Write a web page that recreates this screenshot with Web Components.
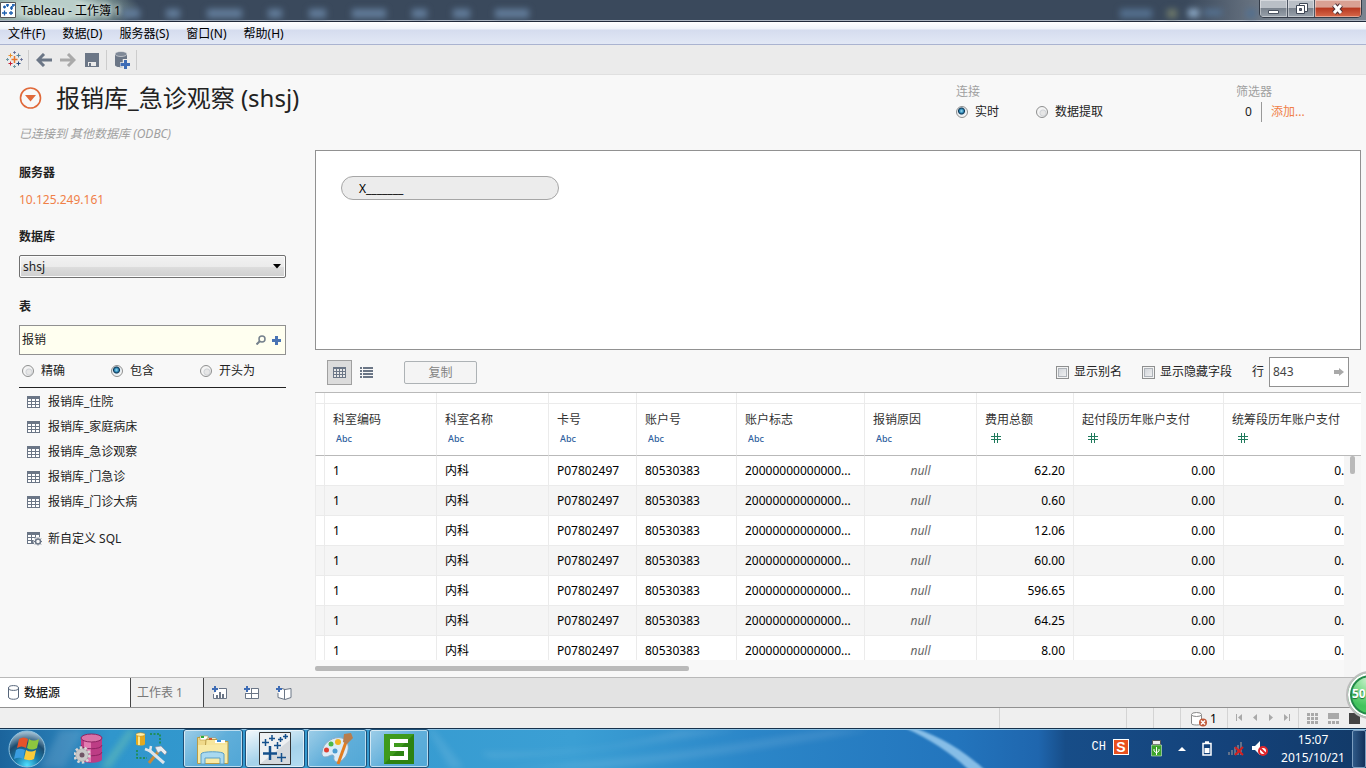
<!DOCTYPE html>
<html lang="zh-CN">
<head>
<meta charset="utf-8">
<title>Tableau - 工作簿 1</title>
<style>
html, body { margin: 0; height: 100%; }
body { font: 12px/16px "Noto Sans", "Noto Sans CJK SC", sans-serif; color: #222; background: #f8f8f8; }
</style>
</head>
<body>
<tb-app></tb-app>
<script>
const BASE = `
*, *::before, *::after { box-sizing: border-box; }
button, input, select { font: inherit; color: inherit; margin: 0; }
button { padding: 0; border: 0; background: none; }
a { text-decoration: none; color: #f08048; }
svg { display: block; flex: none; }
input[type=radio], input[type=checkbox] { appearance: none; flex: none; border: 1px solid #8e8f8f; }
input[type=radio] { width: 12px; height: 12px; border-radius: 50%;
  background: radial-gradient(circle at 60% 60%, #e6e6e6 0 2px, #cfd2d6 3px, #f4f4f4 4px); }
input[type=radio]:checked { background: radial-gradient(circle at 45% 40%, #9fe0f5 0, #2b86b5 2px, #0d3350 3px, #dfe9f0 4px, #f4f4f4 5px); }
input[type=checkbox] { width: 13px; height: 13px; border: 1px solid #8e8f8f; box-shadow: inset 0 0 0 1px #f4f4f4, inset 0 0 0 2px #aeb3b9;
  background: linear-gradient(135deg, #cbcfd5, #f6f6f6); }
label { display: flex; align-items: center; gap: 6px; }
`;
function define(name, css, html) {
  const t = document.createElement('template');
  t.innerHTML = `<style>${BASE}${css}</style>${html}`;
  customElements.define(name, class extends HTMLElement {
    constructor() {
      super();
      this.attachShadow({ mode: 'open' }).append(t.content.cloneNode(true));
    }
  });
}
const TABLE_ICON = `<svg width="13" height="12" viewBox="0 0 13 12"><path fill="#6b7686" d="M0 0h13v12H0z"/><path fill="#fff" d="M1 3h3v2H1zM5 3h3v2H5zM9 3h3v2H9zM1 6h3v2H1zM5 6h3v2H5zM9 6h3v2H9zM1 9h3v2H1zM5 9h3v2H5zM9 9h3v2H9z"/></svg>`;

define('title-bar', `
:host { display: flex; position: relative; height: 22px; overflow: hidden; align-items: center;
  border-bottom: 1px solid #20293a; box-shadow: inset 0 -1px #aab3bf; color: #000;
  background: radial-gradient(ellipse 90px 26px at 50px 8px, #b9cec9 0 40%, #8fa9a4aa 70%, #3a495c00 100%), linear-gradient(90deg, #7f9a90, #3a495c 130px calc(100% - 180px), #76808c calc(100% - 90px), #7a8490); }
.title { flex: 1; padding-left: 5px; text-shadow: 0 0 5px #dfe8e6, 0 0 5px #dfe8e6; position: relative; }
.ghost { position: absolute; top: 0; left: 0; filter: blur(3px); }
.ghost.r { left: auto; right: 100px; }
.win { display: flex; align-self: flex-start; height: 18px; margin-right: 4px; border: 1px solid #333b47; border-top: 0; border-radius: 0 0 5px 5px; overflow: hidden; position: relative; }
.win button { width: 28px; display: grid; place-items: center; background: linear-gradient(#b9bfc6 45%, #7a838e 50%, #98a1ab); border-right: 1px solid #4c5562; box-shadow: inset 0 0 0 1px #ffffff66; }
.win button + button { width: 27px; }
.win button.x { width: 46px; border: 0; background: linear-gradient(#d9a093 40%, #b83a22 50%, #d8694a); }
`, `
<svg class="ghost" width="540" height="21"><g fill="#627c9a"><path d="M122 9h18v9h-18zM166 9h14v9h-14zM207 9h35v9h-35zM268 9h14v9h-14zM309 9h17v9h-17zM352 9h34v9h-34zM412 9h15v9h-15zM453 9h17v9h-17zM495 9h34v9h-34z"/></g></svg>
<svg class="ghost r" width="150" height="21"><path fill="#54708f" d="M4 9h32v9H4zM88 9h18v7H88zM130 9h10v9h-10z"/><path fill="#6d786a" d="M51 9h10v9H51z"/><path fill="#8eabc8" d="M72 9h11v8H72z"/></svg>
<svg width="16" height="17" viewBox="0 0 16 17"><path fill="#fff" stroke="#555" d="M.5.5h15v15H.5z"/><path stroke="#1c5fae" stroke-width="1.300" d="M2 11h5M4.500 8.500v5M3 5h3M4.500 3.500v3M6 3h3M7.500 2v3M10 6h3M11.500 4v4M12 3h3M13 2v3M9 11h4M11 9v4"/></svg>
<span class="title">Tableau - 工作簿 1</span>
<div class="win">
<button aria-label="最小化"><svg width="13" height="14"><path fill="#fff" stroke="#4a5360" d="M1.500 8.500h10v3h-10z"/></svg></button>
<button aria-label="还原"><svg width="13" height="13"><path fill="#fff" stroke="#3f4856" d="M4.500 1.500h8v8h-8z"/><path fill="#fff" stroke="#3f4856" d="M1.500 3.500h8v8h-8z"/><path fill="#667" stroke="#3f4856" d="M4.500 6.500h2v2h-2z"/></svg></button>
<button class="x" aria-label="关闭"><svg width="14" height="12"><path stroke="#4d2f35" stroke-width="5" d="M3 2l7 8M10 2l-7 8"/><path stroke="#fff" stroke-width="3" d="M3 2l7 8M10 2l-7 8"/></svg></button>
</div>`);

define('menu-bar', `
:host { display: flex; height: 23px; padding: 2px 8px 0; gap: 17px; align-items: center; color: #000; border-bottom: 1px solid #aab3d0;
  background: linear-gradient(#fff 0, #eff3fa 7px, #d5dcee 8px, #e2e8f5 100%); }
`, `<button>文件(F)</button><button>数据(D)</button><button>服务器(S)</button><button>窗口(N)</button><button>帮助(H)</button>`);

define('tool-bar', `
:host { display: flex; height: 30px; padding: 0 6px; align-items: center; background: #ebebeb; border-bottom: 1px solid #e0e0e0; }
button { width: 24px; height: 24px; display: grid; place-items: center; }
button.first { width: 17px; }
i { width: 1px; height: 20px; background: #ccc; margin: 0 3px 0 2px; }
.first + i { margin-left: 5px; }
`, `
<button class="first" aria-label="开始"><svg width="17" height="17" viewBox="0 0 17 17" fill="none"><path stroke="#e8762c" stroke-width="1.500" d="M5.500 8.500h6M8.500 5v7"/><path stroke="#eb9129" d="M2.500 4.500h4M4.500 2.500v4"/><path stroke="#59879b" d="M10.500 4.500h4M12.500 2.500v4"/><path stroke="#c72035" d="M2.500 12.500h4M4.500 10.500v4"/><path stroke="#1f457e" d="M10.500 12.500h4M12.500 10.500v4"/><path stroke="#5b6591" stroke-opacity=".8" d="M7 1.500h3M8.500 0v3M14 8.500h3M15.500 7v3"/><path stroke="#7099a5" d="M0 8.500h3M1.500 7v3M7 15.500h3M8.500 14v3"/></svg></button>
<i></i>
<button aria-label="后退"><svg width="16" height="14" fill="none" stroke="#6b7686" stroke-width="3"><path d="M2 7h14M8 1L2 7l6 6"/></svg></button>
<button aria-label="前进"><svg width="16" height="14" fill="none" stroke="#a9a9a9" stroke-width="3"><path d="M0 7h14M8 1l6 6-6 6"/></svg></button>
<button aria-label="保存"><svg width="14" height="14"><path fill="#6b7686" d="M0 0h14v14H0z"/><path fill="#ebebeb" d="M3 9h8v4H3z"/><path fill="#6b7686" d="M4 10h2v3H4z"/></svg></button>
<i></i>
<button aria-label="新建数据源"><svg width="16" height="18"><path fill="#6b7686" d="M1 3v11c0 3 12 3 12 0V3z"/><ellipse cx="7" cy="3" rx="6" ry="2.500" fill="#7f8997" stroke="#ebebeb" stroke-width=".6"/><path stroke="#ebebeb" stroke-width="4.500" d="M6 13.500h10M11 8v10"/><path stroke="#3e6cb5" stroke-width="3" d="M6.500 13.500H16M11.500 9v9"/></svg></button>
<i></i>`);

define('source-header', `
:host { display: flex; height: 75px; padding-left: 19px; }
.name { flex: 1; }
h1 { display: flex; align-items: center; gap: 14px; margin: 0; padding-top: 5px; font: 24px/36px "Noto Sans", "Noto Sans CJK SC", sans-serif; color: #222; }
p { margin: 0; padding-top: 10px; font-style: italic; color: #a0a0a0; }
.grp { padding-top: 9px; }
.grp > span { color: #a0a0a0; display: block; margin-bottom: 2px; }
.live { width: 280px; } .filter { width: 130px; }
.row { display: flex; align-items: center; height: 20px; }
label { width: 80px; gap: 7px; }
label + label { width: 120px; }
b { font-weight: 400; width: 26px; padding-left: 9px; border-right: 1px solid #999; line-height: 20px; margin-right: 9px; }
`, `
<div class="name"><h1><svg width="23" height="23" viewBox="0 0 23 23"><circle cx="11.500" cy="11" r="10" fill="none" stroke="#e0693a" stroke-width="1.600"/><path fill="#e0693a" d="M6 8h11l-5.500 6.500z"/></svg><span>报销库_急诊观察 (shsj)</span></h1>
<p>已连接到 其他数据库 (ODBC)</p></div>
<div class="grp live"><span>连接</span><div class="row"><label><input type="radio" name="mode" checked>实时</label><label><input type="radio" name="mode">数据提取</label></div></div>
<div class="grp filter"><span>筛选器</span><div class="row"><b>0</b><a href="#add">添加...</a></div></div>`);

define('side-panel', `
:host { display: block; padding: 15px 29px 0 19px; width: 315px; flex: none; }
h2 { margin: 0; font: bold 12px/16px "Noto Sans", "Noto Sans CJK SC", sans-serif; }
.ip { display: block; margin: 11px 0 21px; }
.sel { position: relative; display: block; margin: 10px 0 21px; }
select { appearance: none; width: 100%; height: 23px; padding: 0 3px; border: 1px solid #707070; border-radius: 2px; display: block;
  box-shadow: inset 0 0 0 1px #fcfcfc; background: linear-gradient(#f2f2f2, #ebebeb 50%, #dddddd 51%, #cfcfcf); color: #222; }
.sel svg { position: absolute; right: 5px; top: 9px; }
.find { display: flex; align-items: center; gap: 6px; height: 30px; margin: 10px 0 8px; border: 1px solid #919191; background: #fffff0; padding: 0 4px 0 2px; }
.find input { flex: 1; min-width: 0; border: 0; padding: 0; background: none; outline: 0; }
.how { display: grid; grid-template-columns: repeat(3, 1fr); padding: 0 0 8px 3px; margin-right: -3px; }
.how label { gap: 7px; }
hr { margin: 0 0 1px; border: 0; height: 1px; background: #222; }
ul { margin: 0; padding: 0; list-style: none; }
li { display: flex; align-items: center; gap: 8px; height: 25px; padding-left: 8px; }
.sql { margin-top: 12px; gap: 6px; }
`, `
<h2>服务器</h2><a class="ip" href="#server">10.125.249.161</a>
<h2 id="db">数据库</h2><div class="sel"><select aria-labelledby="db"><option>shsj</option></select><svg width="8" height="5"><path d="M0 0h8L4 4.500z"/></svg></div>
<h2 id="tb">表</h2>
<div class="find"><input type="text" aria-labelledby="tb" value="报销"><svg width="10" height="10" fill="none" stroke="#75808c" stroke-width="1.500"><circle cx="6" cy="4" r="3"/><path stroke-width="2" d="M4 6L.5 9.500"/></svg><svg width="9" height="9" stroke="#4a74b4" stroke-width="3"><path d="M0 4.500h9M4.500 0v9"/></svg></div>
<div class="how"><label><input type="radio" name="how">精确</label><label><input type="radio" name="how" checked>包含</label><label><input type="radio" name="how">开头为</label></div>
<hr>
<ul>
${['住院','家庭病床','急诊观察','门急诊','门诊大病'].map(n => `<li>${TABLE_ICON}报销库_${n}</li>`).join('')}
<li class="sql"><svg width="15" height="14"><path fill="#6b7686" d="M0 0h13v12H0z"/><path fill="#fff" d="M1 3h3v2H1zM5 3h3v2H5zM9 3h3v2H9zM1 6h3v2H1zM5 6h3v2H5zM1 9h3v2H1z"/><circle cx="11" cy="9.500" r="4.500" fill="#f8f8f8"/><circle cx="11" cy="9.500" r="2.500" fill="none" stroke="#6b7686" stroke-width="1.500"/><path stroke="#6b7686" d="M11 5.500v1M11 12.500v1M7 9.500h1M14 9.500h1M8 6.500l1 1M13 11.500l1 1M14 6.500l-1 1M9 11.500l-1 1"/></svg>新自定义 SQL</li>
</ul>`);

define('join-canvas', `
:host { display: block; height: 200px; padding: 25px; background: #fff; border: 1px solid #919191; }
div { width: 218px; height: 24px; padding: 0 17px; line-height: 24px; border: 1px solid #a6a6a6; border-radius: 12px; background: #ececec; color: #000; }
`, `<div>X_______</div>`);

define('grid-tools', `
:host { display: flex; align-items: center; height: 42px; padding: 2px 12px 0; }
.on { width: 25px; height: 25px; display: grid; place-items: center; background: #dcdcdc; border: 1px solid #a0a0a0; }
.list { margin: 0 31px 0 8px; }
.copy { width: 73px; height: 23px; padding-top: 1px; border: 1px solid #adb2b5; border-radius: 2px; background: #f4f4f4; color: #838383; }
.sp { flex: 1; }
label { gap: 5px; margin-right: 20px; }
.rows { margin: 0; }
.num { display: flex; align-items: center; width: 80px; height: 30px; border: 1px solid #919191; background: #fff; padding: 0 4px 0 3px; }
.num input { width: 60px; flex: 1; min-width: 0; border: 0; padding: 0; background: none; outline: 0; color: #444; }
`, `
<button class="on" aria-label="网格"><svg width="13" height="11" viewBox="0 0 13 11"><path fill="#6b7686" d="M0 0h13v11H0z"/><path fill="#e8e8e8" d="M1 2h2v2H1zM4 2h2v2H4zM7 2h2v2H7zM10 2h2v2h-2zM1 5h2v2H1zM4 5h2v2H4zM7 5h2v2H7zM10 5h2v2h-2zM1 8h2v2H1zM4 8h2v2H4zM7 8h2v2H7zM10 8h2v2h-2z"/></svg></button>
<button class="list" aria-label="列表"><svg width="13" height="11"><path fill="#6b7686" d="M0 0h2v2H0zM3 0h10v2H3zM0 3h2v2H0zM3 3h10v2H3zM0 6h2v2H0zM3 6h10v2H3zM0 9h2v2H0zM3 9h10v2H3z"/></svg></button>
<button class="copy">复制</button>
<span class="sp"></span>
<label><input type="checkbox">显示别名</label><label><input type="checkbox">显示隐藏字段</label>
<label class="rows">行<span class="num"><input type="text" value="843"><svg width="10" height="8"><path fill="#a9a9a9" d="M0 2h5V0l5 4-5 4V6H0z"/></svg></span></label>`);

const COLS = [['科室编码','a',112],['科室名称','a',112],['卡号','a',88],['账户号','a',100],['账户标志','a',128],['报销原因','a',112],['费用总额','n',97],['起付段历年账户支付','n',150],['统筹段历年账户支付','n',143]];
const AMOUNTS = ['62.20','0.60','12.06','60.00','596.65','64.25','8.00'];
define('data-grid', `
:host { display: flex; flex-direction: column; flex: 1; min-height: 0; position: relative; border-top: 1px solid #b9b9b9; }
.view { flex: 1; min-height: 0; overflow: hidden; background: #fff; }
table { border-collapse: separate; border-spacing: 0; table-layout: fixed; width: 1051px; min-width: 100%; }
th, td { border-left: 1px solid #ebebeb; padding: 0 8px; text-align: left; font-weight: 400; white-space: nowrap; overflow: hidden; }
.top th { height: 11px; border-bottom: 1px solid #ebebeb; }
.head th { height: 52px; border-bottom: 1px solid #b9b9b9; vertical-align: top; padding-top: 8px; color: #333; }
.type { display: block; padding-top: 3px; padding-left: 3px; font-size: 9px; color: #2f5f9e; font-weight: 500; height: 19px; }
.type.n { padding: 5px 0 0 6px; }
td { height: 30px; border-bottom: 1px solid #ebebeb; color: #000; }
tr:nth-child(even) td { background: #f5f5f5; }
td.n { text-align: right; } td.nul { text-align: center; font-style: italic; color: #666; }
th.g, td.g { padding: 0; }
.vbar { position: absolute; right: 0; top: 63px; bottom: 0; width: 17px; background: #f5f5f5; padding-left: 6px; }
.vbar i { display: block; width: 5px; height: 18px; border-radius: 2px; background: #b9b9b9; }
.hbar { height: 17px; padding-top: 6px; background: #f8f8f8; }
.hbar i { display: block; width: 374px; height: 5px; border-radius: 2px; background: #b9b9b9; }
`, `
<div class="view"><table><colgroup><col style="width:9px">${COLS.map(c => `<col style="width:${c[2]}px">`).join('')}</colgroup>
<thead><tr class="top" aria-hidden="true">${'<th></th>'.repeat(10)}</tr>
<tr class="head"><th class="g"></th>${COLS.map(c => `<th>${c[0]}${c[1] === 'a' ? '<span class="type">Abc</span>' : '<span class="type n"><svg width="10" height="10" fill="none" stroke="#1f7a5c"><path d="M0 3.500h10M0 6.500h10M3.500 0v10M6.500 0v10"/></svg></span>'}</th>`).join('')}</tr></thead>
<tbody>${AMOUNTS.map(a => `<tr><td class="g"></td><td>1</td><td>内科</td><td>P07802497</td><td>80530383</td><td>20000000000000...</td><td class="nul">null</td><td class="n">${a}</td><td class="n">0.00</td><td class="n">0.00</td></tr>`).join('')}</tbody></table></div>
<div class="hbar"><i></i></div><div class="vbar"><i></i></div>`);

define('sheet-tabs', `
:host { display: flex; height: 31px; background: #e3e3e3; border-top: 1px solid #b9b9b9; border-bottom: 1px solid #919191; }
.tab { display: flex; align-items: center; border-right: 1px solid #444; text-align: left; }
.src { width: 131px; padding-left: 8px; gap: 5px; background: #fff; font-weight: 500; }
.sheet { width: 73px; padding-left: 6px; background: #f0f0f0; color: #777; }
.new { width: 32px; display: grid; place-items: center; }
`, `
<button class="tab src"><svg width="11" height="15" fill="none" stroke="#56657a"><path d="M.5 3v9c0 3 10 3 10 0V3"/><ellipse cx="5.500" cy="3" rx="5" ry="2.400"/></svg>数据源</button>
<button class="tab sheet">工作表 1</button>
<button class="new" aria-label="新建工作表"><svg width="16" height="14"><path fill="#fff" stroke="#6b7686" d="M7 2.500h7.500v10H1.500V8"/><path stroke="#6b7686" stroke-width="2" d="M5 12V9M8 12V6M11 12V8"/><path stroke="#3e6cb5" stroke-width="2" d="M0 3h6M3 0v6"/></svg></button>
<button class="new" aria-label="新建仪表板"><svg width="16" height="14"><path fill="#fff" stroke="#6b7686" d="M7 2.500h7.500v10H1.500V7M1 7.500h13M7.500 2v10"/><path stroke="#3e6cb5" stroke-width="2" d="M0 3h6M3 0v6"/></svg></button>
<button class="new" aria-label="新建故事"><svg width="16" height="14"><path fill="#fff" stroke="#6b7686" d="M6 2.500l3 1 6-1v9l-6 2-7-2V7M8.500 3v10"/><path stroke="#3e6cb5" stroke-width="2" d="M0 3h6M3 0v6"/></svg></button>`);

define('status-bar', `
:host { display: flex; justify-content: flex-end; height: 20px; background: #efefef; color: #000; }
div { display: flex; align-items: center; border-left: 1px solid #d4d4d4; }
.a { width: 127px; } .b { width: 27px; } .c { width: 47px; padding: 2px 0 0 10px; gap: 2px; }
.d { width: 71px; padding-left: 8px; } .e { width: 68px; padding-left: 8px; }
`, `
<div class="a"></div><div class="b"></div><div class="b"></div>
<div class="c"><svg width="17" height="15"><path fill="#fff" stroke="#888" d="M.5 2.500v9c0 2 10 2 10 0v-9"/><ellipse cx="5.500" cy="2.500" rx="5" ry="2" fill="#fff" stroke="#888"/><circle cx="12" cy="10.500" r="4" fill="#c05a3a"/><path stroke="#fff" stroke-width="1.500" d="M10 8.500l4 4M14 8.500l-4 4"/></svg>1</div>
<div class="d"><svg width="56" height="8" fill="#a9a9a9"><path d="M0 0h1v7H0zM6 0v7L2 3.500zM21 0v7l-4-3.500zM33 0v7l4-3.500zM48 0v7l4-3.500zM53 0h1v7h-1z"/></svg></div>
<div class="e"><svg width="59" height="11" fill="#a9a9a9"><path d="M0 0h3v3H0zM4 0h3v3H4zM8 0h3v3H8zM0 4h3v3H0zM4 4h3v3H4zM8 4h3v3H8zM0 8h3v3H0zM4 8h3v3H4zM8 8h3v3H8zM21 0h11v6H21zM21 8h3v3h-3zM25 8h3v3h-3zM29 8h3v3h-3z"/><path fill="#444" d="M42 0h11v11H42z"/></svg></div>`);

define('task-bar', `
:host { display: flex; align-items: center; height: 40px; position: relative; overflow: hidden; color: #fff; border-top: 1px solid #17324d; box-shadow: inset 0 1px #8fc4e6;
  background: linear-gradient(90deg, #1b649c 0, #2a80b8 70px, #3096cc 110px, #3b9fd4 42%, #2b86c8 55%, #2375bd 70%, #1f66ae 76%, #174d88 78%, #14427a 90%, #123a68 100%); }
.streaks { position: absolute; inset: 1px 0 0; width: 100%; height: 38px; }
button { position: relative; flex: none; }
.orb { margin: 0 27px 0 8px; }
.pin { width: 31px; margin-right: 31px; display: grid; place-items: center; }
.pin + .pin { width: 33px; margin-right: 15px; }
.task { width: 60px; height: 39px; margin-right: 2px; display: grid; place-items: center; border: 1px solid #1d4f77; border-radius: 3px; box-shadow: inset 0 0 0 1px #ffffff99;
  background: linear-gradient(135deg, #b9dbeecc, #77b9dfaa 50%, #5fadd9aa); }
.task.on { background: linear-gradient(160deg, #f3f9fc, #a5d2ea 60%, #b4ddf2); }
.sp { flex: 1; }
.tray { display: flex; align-items: center; gap: 16px; position: relative; height: 36px; }
.ime { display: flex; align-items: center; gap: 7px; margin: 0 6px 4px 0; font: 12px/16px "Liberation Mono", monospace; }
.clock { text-align: center; line-height: 18px; width: 66px; margin: 0 6px 0 -4px; }
.desk { width: 14px; height: 38px; border: 1px solid #7b9dbf; border-radius: 2px; background: linear-gradient(90deg, #2f5a88, #12305a); }
`, `
<svg class="streaks" viewBox="0 0 1366 38" preserveAspectRatio="none"><defs><filter id="soft" x="-10%" y="-30%" width="120%" height="160%"><feGaussianBlur stdDeviation="3"/></filter><filter id="edge"><feGaussianBlur stdDeviation="1"/></filter></defs><g fill="#fff" filter="url(#soft)"><path opacity=".12" d="M40 38L60 0h24L64 38z"/><path opacity=".1" d="M428 0l22 38h14L434 0zM490 28C580 26 690 6 740 0h-60C620 18 560 24 480 22zM500 38c160-8 260-30 330-38h40C760 20 660 34 590 38z"/></g><path fill="#9fe8a0" opacity=".3" filter="url(#soft)" d="M100 38L128 0h8l-26 38z"/><path fill="#a8d6f5" opacity=".75" filter="url(#edge)" d="M915 -2c28 10 50 24 70 42h-16C952 24 932 10 905 -2z"/></svg>
<button class="orb" aria-label="开始"><svg width="38" height="38" viewBox="0 0 38 38"><defs><radialGradient id="o" cx=".5" cy=".95" r=".9"><stop offset="0" stop-color="#4fe0ff"/><stop offset=".35" stop-color="#1b7fae"/><stop offset=".7" stop-color="#1b4c70"/><stop offset="1" stop-color="#9ab8cc"/></radialGradient></defs><circle cx="19" cy="19" r="18" fill="url(#o)" stroke="#8fc3df"/><path fill="#e5532a" d="M11 9c3-2 6-2 9 0l-2 9c-3-2-6-2-9 0z"/><path fill="#8ec63f" d="M21 9c3 2 6 2 10 0l-2 9c-4 2-7 2-10 0z"/><path fill="#3a9de0" d="M8 20c3-2 6-1 9 0l-2 9c-3-2-6-1-9 0z"/><path fill="#fbcb3a" d="M18 20c3 2 6 2 10 0l-2 9c-4 2-7 1-10 0z"/></svg></button>
<button class="pin" aria-label="数据库管理"><svg width="30" height="32" viewBox="0 0 30 32"><path fill="#bd3d85" d="M7 4v22c0 5 21 5 21 0V4z"/><path fill="#e27bb1" d="M10 8v20c3 1 5 1 7 1V9z"/><ellipse cx="17.500" cy="5" rx="10.500" ry="4" fill="#d973a8" stroke="#8e2462"/><path fill="none" stroke="#8e2462" d="M7 12c0 5 21 5 21 0M7 19c0 5 21 5 21 0"/><circle cx="8" cy="22" r="6.500" fill="#c9c9c9" stroke="#999"/><circle cx="8" cy="22" r="7.500" fill="none" stroke="#d8d8d8" stroke-width="2.500" stroke-dasharray="2.500 2.200"/><circle cx="8" cy="22" r="2.500" fill="#6f5566"/></svg></button>
<button class="pin" aria-label="配置工具"><svg width="33" height="33" viewBox="0 0 33 33"><path fill="#e3a91e" d="M1 2v10c0 2 9 2 9 0V2z"/><path fill="#ffe98f" d="M3 2v11h2V2z"/><ellipse cx="5.500" cy="2.500" rx="4.500" ry="1.800" fill="#fff0a8" stroke="#b77f10" stroke-width=".6"/><path fill="none" stroke="#1d8c3b" stroke-width="1.500" stroke-dasharray="2 1.500" d="M15 2h10v11M2 18v8h10"/><path stroke="#c88a3a" stroke-width="3" d="M23 20l-9 11"/><path stroke="#dce4ea" stroke-width="3" d="M14 18l15 13"/><path fill="#e8edf0" stroke="#889" stroke-width=".6" d="M20 15l6-1 6 6-2 3-4-4-3 2z"/><path fill="none" stroke="#e0e6ea" stroke-width="2.500" d="M10 17l5 2 1-5"/></svg></button>
<button class="task" aria-label="资源管理器"><svg width="34" height="32" viewBox="0 0 34 32"><path fill="#efd98a" stroke="#b99b45" d="M1.500 4.500h8l2 2h9v24h-19z"/><path fill="#fff" stroke="#b99b45" stroke-width=".6" d="M4 3h8v4H4zM11 5h9v4h-9z"/><path fill="#f6e59b" stroke="#b99b45" d="M10 6.500h11l2 2h9v22H8z"/><path fill="#f8eaa6" d="M2 12h29v18H2z"/><path fill="#2cae3a" d="M5 3h3v2H5z"/><path fill="#d9542b" d="M13 5h3v2h-3z"/><path fill="#fff" d="M19 7h10v3H19z"/><path fill="#3a8edb" d="M21 7h4v2h-4z"/><path fill="#a9d9f0" stroke="#5b9fc6" d="M5 31V21c0-3 23-3 23 0v10h-4v-6H9v6z"/></svg></button>
<button class="task on" aria-label="Tableau"><svg width="32" height="33" viewBox="0 0 32 33"><path fill="#eef0f2" stroke="#333" d="M.5.5h31v32H.5z"/><path fill="#d5d9dd" d="M1 32L31 8v24z"/><g stroke="#15508c"><path stroke-width="2.500" d="M4 21.500h14M11 14v14"/><path stroke-width="1.500" d="M3 10.500h7M6.500 7v7M10 6.500h6M13 3v6M15 13.500h7M18.500 10v7M19 7.500h5M21.500 5v5M24 4.500h5M26.500 2v5M18 25.500h9M22.500 21v9"/></g></svg></button>
<button class="task" aria-label="画图"><svg width="34" height="34" viewBox="0 0 34 34"><path fill="#dcecf7" stroke="#87a8c2" d="M2 20C3 10 14 4 22 6c9 3 8 17-1 23-5 3-8-1-7-4 0-3-3-2-5-1-4 2-8 1-7-4z"/><circle cx="6.500" cy="18" r="2.500" fill="#df3f32"/><circle cx="11" cy="12" r="2.500" fill="#4cb847"/><circle cx="18" cy="10" r="3" fill="#f3b320"/><circle cx="15" cy="19" r="2.500" fill="#4b9cd0"/><path stroke="#e27d20" stroke-width="3" d="M26 10l-8 22"/><path fill="#b87d4d" d="M24 2l7-1 2 5-6 6-4-2z"/></svg></button>
<button class="task" aria-label="表格"><svg width="30" height="30" viewBox="0 0 30 30"><path fill="#3f9a1c" d="M0 0h30v30H0z"/><path fill="#2d8212" d="M0 30L30 0v30z"/><path fill="none" stroke="#fff" stroke-width="4" d="M24 7H8v8h14v9H6"/></svg></button>
<span class="sp"></span>
<div class="tray">
<span class="ime">CH<svg width="16" height="16"><path fill="#fff" d="M0 0h16v16H0z"/><path fill="#e8501e" d="M1 1h14v14H1z"/><text x="8" y="13" text-anchor="middle" fill="#fff" font-family="Liberation Sans" font-weight="bold" font-size="14">S</text></svg></span>
<svg width="11" height="17"><path fill="#eee" stroke="#555" d="M1.500.5h8v4h-8z"/><path fill="#3da52a" stroke="#d6efd0" stroke-width=".6" d="M.5 5h10v11H.5z"/><path fill="none" stroke="#fff" d="M5.500 7v8M3 9v2l2.500 2L8 11V9"/></svg>
<svg width="8" height="4"><path fill="#fff" d="M0 4l4-4 4 4z"/></svg>
<svg width="10" height="15"><path fill="none" stroke="#fff" stroke-width="1.500" d="M1 2.500h8V14H1zM3 1h4"/><path fill="#fff" d="M2.500 7h5v5h-5z"/></svg>
<svg width="16" height="15"><path fill="#63728a" d="M0 11h2v3H0zM3 9h2v5H3zM6 6h2v8H6zM9 4h2v10H9zM12 1h2v13h-2z"/><path stroke="#d41f1f" stroke-width="2" d="M7 6l8 8M15 6l-8 8"/></svg>
<svg width="16" height="16" style="margin-left:-8px"><path fill="#fff" d="M0 5h3l5-5v14l-5-5H0z"/><circle cx="11" cy="10" r="4" fill="#fff" stroke="#e0262b" stroke-width="2"/><path stroke="#e0262b" stroke-width="2" d="M8 7l6 6"/></svg>
<div class="clock">15:07<br>2015/10/21</div></div>
<button class="desk" aria-label="显示桌面"></button>`);

define('speed-ball', `
:host { position: absolute; right: -28px; bottom: 49px; width: 48px; height: 48px; border-radius: 50%; border: 2px solid #bdbdbd; box-shadow: inset 0 0 0 2px #fff, inset 0 0 0 4px #238a4a;
  background: radial-gradient(circle at 45% 15%, #c8f0cc, #7fdc8d 30%, #42c35c 60%, #4fce63); color: #fff; font-weight: 700; font-size: 12px; line-height: 42px; padding-left: 4px; box-sizing: border-box; text-shadow: 0 1px 1px #1b7034; }
`, `50`);

define('tb-app', `
:host { display: flex; flex-direction: column; height: 100vh; min-height: 600px; position: relative; overflow: hidden; }
main { flex: 1; min-height: 0; display: flex; flex-direction: column; background: #f8f8f8; }
.body { flex: 1; min-height: 0; display: flex; }
.work { flex: 1; min-width: 0; display: flex; flex-direction: column; margin-right: 5px; }
join-canvas, grid-tools, source-header, title-bar, menu-bar, tool-bar, sheet-tabs, status-bar, task-bar { flex: none; }
`, `
<title-bar></title-bar><menu-bar></menu-bar><tool-bar></tool-bar>
<main><source-header></source-header>
<div class="body"><side-panel></side-panel><section class="work"><join-canvas></join-canvas><grid-tools></grid-tools><data-grid></data-grid></section></div></main>
<sheet-tabs></sheet-tabs><status-bar></status-bar><task-bar></task-bar><speed-ball></speed-ball>`);
</script>
</body>
</html>
